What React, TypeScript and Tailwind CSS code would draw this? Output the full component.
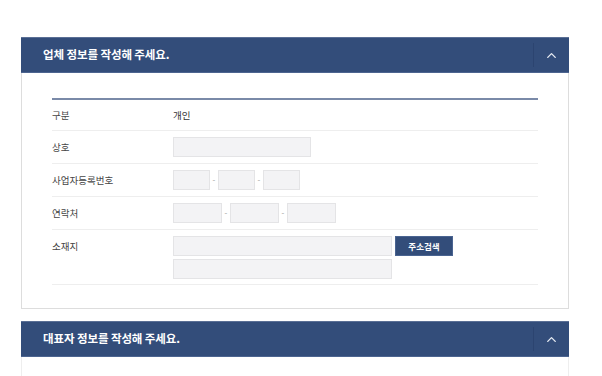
import { ChevronUp } from 'lucide-react';

const font = { fontFamily: '"Noto Sans CJK KR", "Noto Sans", sans-serif' };

function Header({ title }: { title: string }) {
  return (
    <div className="flex h-[36px] items-center bg-[#334d7a] border-t border-t-[#5a6f95] border-b border-b-[#4d6590]">
      <h2 className="flex-1 pl-[22px] text-[11.5px] font-bold tracking-[-0.1px] text-white">{title}</h2>
      <div className="h-[24px] w-px bg-[#2c4470]" />
      <button className="flex h-full w-[35px] items-center justify-center text-[#e8ecf3]">
        <ChevronUp size={15} strokeWidth={2.2} />
      </button>
    </div>
  );
}

function Field({ w }: { w: string }) {
  return <div className={`h-[20px] border border-[#e4e4e6] bg-[#f3f3f5] ${w}`} />;
}

function Dash() {
  return <span className="w-[8px] text-center text-[8px] leading-[20px] text-[#999]">-</span>;
}

function Row({ label, children, last }: { label: string; children: React.ReactNode; last?: boolean }) {
  return (
    <div className={`flex items-start pt-[6px] ${last ? 'pb-[5px]' : 'pb-[6px]'} border-b border-[#eeeeee]`}>
      <div className="w-[121px] text-[9.5px] leading-[20px] text-[#444]">{label}</div>
      <div className="flex-1">{children}</div>
    </div>
  );
}

export default function App() {
  return (
    <div className="min-h-[376px] bg-white" style={font}>
      <div className="ml-[21px] w-[548px] pt-[37px]">
        <section>
          <Header title="업체 정보를 작성해 주세요." />
          <div className="border-x border-b border-[#dddddd] px-[30px] pt-[25px] pb-[23px]">
            <div className="border-t-2 border-[#7a8aa8]">
              <div className="flex items-center border-b border-[#eeeeee] h-[31px]">
                <div className="w-[121px] text-[9.5px] text-[#444]">구분</div>
                <div className="text-[9.5px] text-[#333]">개인</div>
              </div>
              <Row label="상호">
                <Field w="w-[138px]" />
              </Row>
              <Row label="사업자등록번호">
                <div className="flex">
                  <Field w="w-[37px]" />
                  <Dash />
                  <Field w="w-[37px]" />
                  <Dash />
                  <Field w="w-[37px]" />
                </div>
              </Row>
              <Row label="연락처">
                <div className="flex">
                  <Field w="w-[49px]" />
                  <Dash />
                  <Field w="w-[49px]" />
                  <Dash />
                  <Field w="w-[49px]" />
                </div>
              </Row>
              <Row label="소재지" last>
                <div className="flex flex-col gap-[3px]">
                  <div className="flex gap-[3px]">
                    <Field w="w-[219px]" />
                    <button className="h-[20px] w-[58px] border border-[#4a6491] bg-[#334d7a] text-[8.5px] font-bold text-white">
                      주소검색
                    </button>
                  </div>
                  <Field w="w-[219px]" />
                </div>
              </Row>
            </div>
          </div>
        </section>
        <section className="mt-[12px]">
          <Header title="대표자 정보를 작성해 주세요." />
          <div className="h-[20px] border-x border-[#eeeeee]" />
        </section>
      </div>
    </div>
  );
}
